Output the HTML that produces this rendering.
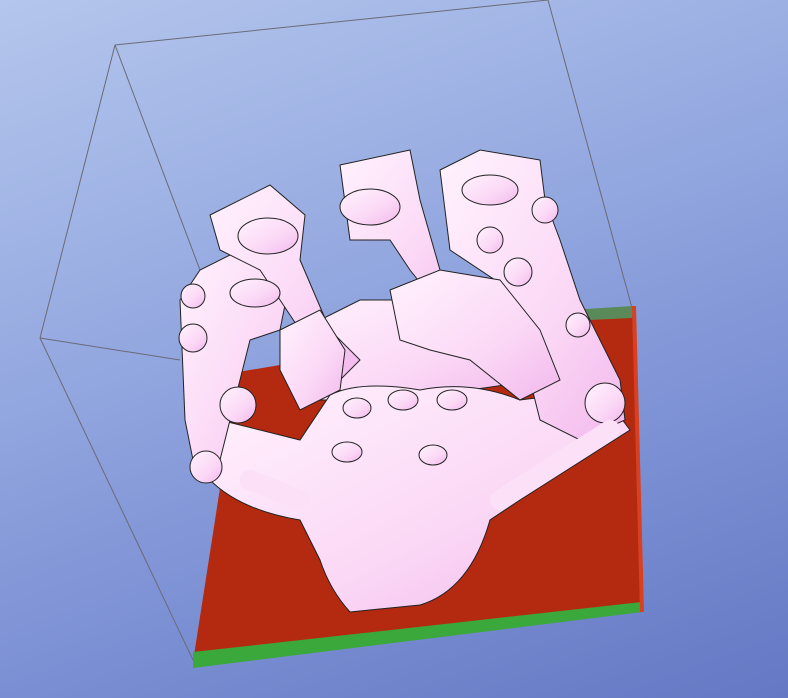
<!DOCTYPE html>
<html><head><style>
html,body{margin:0;padding:0;width:788px;height:698px;overflow:hidden}
body{background:linear-gradient(160deg,#b4c6ec 0%,#98ace2 35%,#7f93d6 65%,#6478c4 100%)}
svg{position:absolute;left:0;top:0}
</style></head><body>
<svg width="788" height="698" viewBox="0 0 788 698">
<defs>
<linearGradient id="p" x1="0" y1="0" x2="1" y2="1">
<stop offset="0" stop-color="#fff2fd"/><stop offset="0.6" stop-color="#fbd8f6"/><stop offset="1" stop-color="#f2b8ec"/></linearGradient>
</defs>
<g stroke="#6a6a78" stroke-width="1" fill="none">
<line x1="115" y1="45" x2="548" y2="0"/>
<line x1="115" y1="45" x2="40" y2="338"/>
<line x1="40" y1="338" x2="193" y2="660"/>
<line x1="115" y1="45" x2="200" y2="270"/>
<line x1="548" y1="0" x2="632" y2="308"/>
<line x1="40" y1="338" x2="180" y2="360"/>
</g>
<polygon points="238,372 632,306 642,612 193,662" fill="#b42a10"/>
<polygon points="193,652 642,602 642,612 193,668" fill="#3aa83a"/>
<polygon points="632,306 636,306 644,612 640,612" fill="#d84020"/>
<polygon points="540,312 632,306 632,318 545,322" fill="#5a8a5a"/>
<g fill="url(#p)" stroke="#222" stroke-width="1">
<path d="M300,330 L360,300 L420,300 L470,290 L520,320 L540,380 L400,400 L320,400 Z"/>
<path d="M330,395 Q360,380 420,390 Q470,380 520,400 L600,390 L630,430 L520,500 L490,520 Q470,590 420,605 L350,612 Q330,590 320,560 L300,520 Q240,510 210,480 L195,440 L220,420 L300,440 Z"/>
<path d="M180,300 L200,270 L240,250 L290,280 L280,330 L250,340 L220,460 L195,470 L185,420 Z"/>
<path d="M210,215 L270,185 L305,215 L300,260 L330,330 L360,360 L340,380 L300,330 L260,270 L220,250 Z"/>
<path d="M340,165 L410,150 L420,200 L440,270 L470,300 L450,320 L410,270 L390,240 L350,240 Z"/>
<path d="M440,170 L480,150 L540,160 L545,200 L560,240 L580,300 L620,380 L625,420 L580,440 L540,420 L520,340 L495,280 L450,250 Z"/>
<path d="M280,330 L320,310 L345,350 L340,390 L300,410 L280,370 Z"/>
<path d="M390,290 L440,270 L500,280 L540,330 L560,380 L520,400 L470,360 L430,350 L400,340 Z"/>
<ellipse cx="268" cy="236" rx="30" ry="18"/>
<ellipse cx="370" cy="207" rx="30" ry="18"/>
<ellipse cx="255" cy="293" rx="25" ry="14"/>
<ellipse cx="490" cy="190" rx="28" ry="15"/>
<circle cx="193" cy="296" r="12"/>
<circle cx="193" cy="338" r="14"/>
<circle cx="545" cy="210" r="13"/>
<circle cx="518" cy="272" r="14"/>
<circle cx="490" cy="240" r="13"/>
<circle cx="578" cy="325" r="12"/>
<circle cx="605" cy="403" r="20"/>
<circle cx="206" cy="467" r="16"/>
<circle cx="238" cy="405" r="18"/>
<ellipse cx="357" cy="408" rx="14" ry="10"/>
<ellipse cx="403" cy="400" rx="15" ry="10"/>
<ellipse cx="452" cy="400" rx="15" ry="10"/>
<ellipse cx="347" cy="452" rx="15" ry="10"/>
<ellipse cx="433" cy="455" rx="14" ry="10"/>
</g>
<g stroke="#fbe0f7" stroke-width="20" stroke-linecap="round" fill="none">
<path d="M250,480 L300,500"/>
<path d="M500,500 L610,430"/>
</g>
</svg>
</body></html>
